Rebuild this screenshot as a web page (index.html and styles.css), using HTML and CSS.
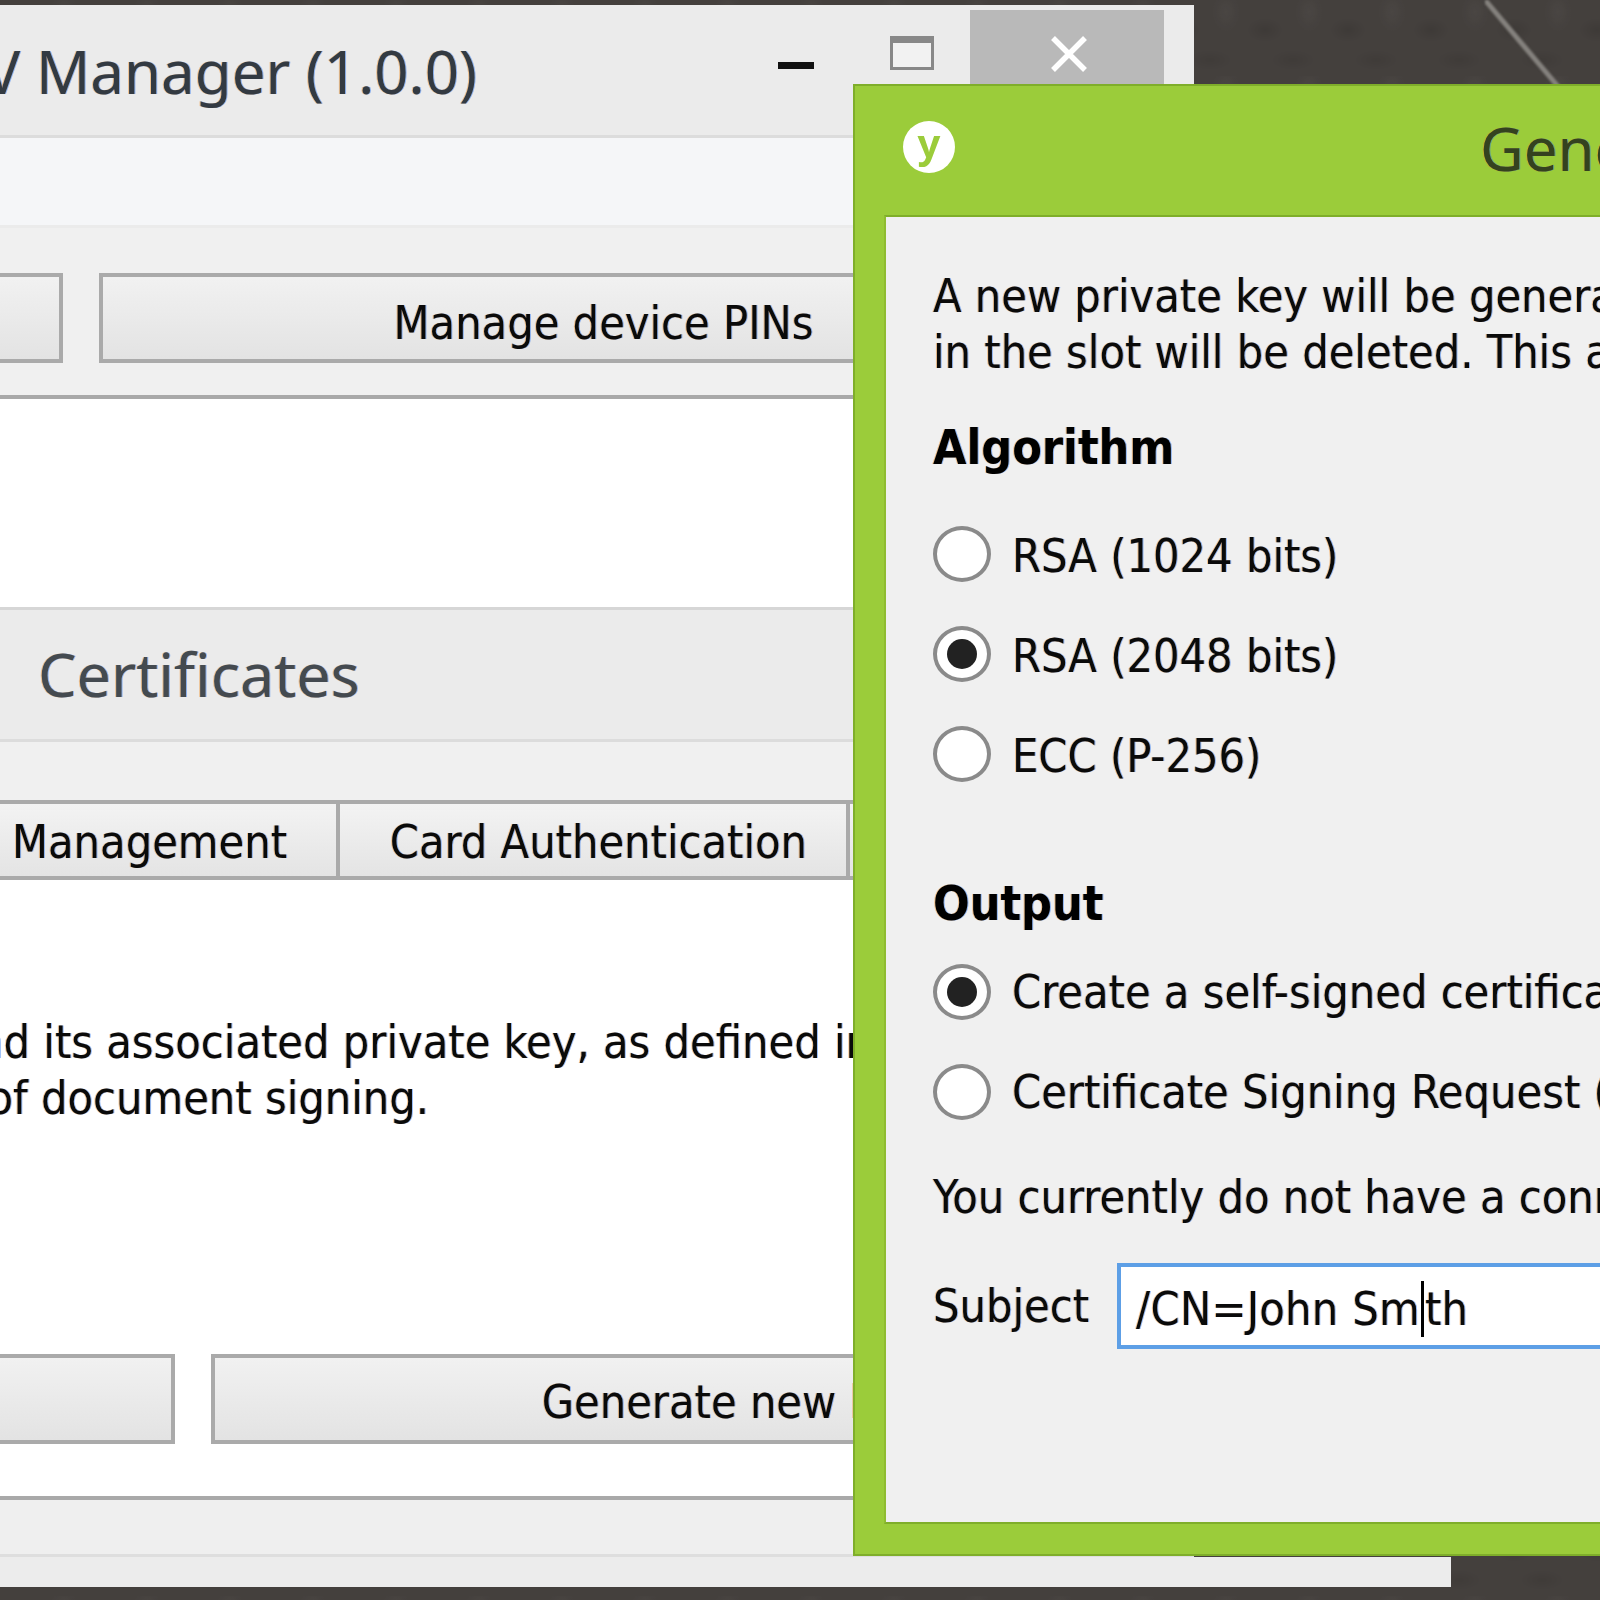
FILE: index.html
```html
<!DOCTYPE html>
<html lang="en">
<head>
<meta charset="utf-8">
<title>YubiKey PIV Manager</title>
<link rel="stylesheet" href="styles.css">
</head>
<body>
<div class="desktop">
  <svg class="streak" width="100" height="100" viewBox="0 0 100 100"><path d="M0 0 L76 90" stroke="#85827e" stroke-width="5" fill="none"/></svg>

  <section class="window main">
    <header class="titlebar">
      <span class="win-title">YubiKey PIV Manager (1.0.0)</span>
      <div class="controls">
        <span class="ctl ctl-min"><i></i></span>
        <span class="ctl ctl-max"><i></i></span>
        <span class="ctl ctl-close">
          <svg width="36" height="36" viewBox="0 0 36 36"><path d="M2 2 L34 34 M34 2 L2 34" stroke="#fff" stroke-width="5.5" fill="none"/></svg>
        </span>
      </div>
    </header>
    <div class="menubar"></div>
    <div class="toolbar">
      <button class="btn btn-a">Change</button>
      <button class="btn btn-b">Manage device PINs</button>
    </div>
    <div class="white-a"></div>
    <h2 class="section-head">Certificates</h2>
    <div class="tabs">
      <span class="tab tab-key">Key Management</span>
      <span class="tab tab-card">Card Authentication</span>
      <span class="tab tab-last"></span>
    </div>
    <div class="panel">
      <p class="panel-line line-one">This slot is for the X.509 certificate and its associated private key, as defined in</p>
      <p class="panel-line line-two">FIPS 201, used for the purposes of document signing.</p>
      <div class="panel-btns">
        <button class="btn btn-c">Import</button>
        <button class="btn btn-d">Generate new key</button>
      </div>
    </div>
    <div class="foot-a"></div>
    <div class="foot-b"></div>
  </section>

  <section class="window dialog">
    <header class="dlg-title">
      <svg class="logo" width="54" height="54" viewBox="0 0 54 54"><circle cx="27" cy="27" r="26" fill="#fff"/><text x="27" y="38" class="logo-y">y</text></svg>
      <span class="dlg-name">Generate new key</span>
    </header>
    <div class="dlg-body">
      <p class="intro">A new private key will be generated and stored in the selected slot. Any existing key<br>in the slot will be deleted. This action cannot be undone.</p>
      <h3 class="group group-alg">Algorithm</h3>
      <div class="radios">
        <label class="radio"><span class="dot"></span>RSA (1024 bits)</label>
        <label class="radio"><span class="dot on"></span>RSA (2048 bits)</label>
        <label class="radio"><span class="dot"></span>ECC (P-256)</label>
      </div>
      <h3 class="group group-out">Output</h3>
      <div class="radios">
        <label class="radio"><span class="dot on"></span>Create a self-signed certificate for the key</label>
        <label class="radio"><span class="dot"></span>Certificate Signing Request (CSR)</label>
      </div>
      <p class="note">You currently do not have a connection to the server</p>
      <div class="subject">
        <span class="subject-label">Subject</span>
        <div class="field"><span>/CN=John Sm</span><i class="caret"></i><span>th</span></div>
      </div>
    </div>
  </section>
</div>
</body>
</html>
```
FILE: styles.css
```css
html, body { margin: 0; padding: 0; }
p, h2, h3 { margin: 0; }
body { width: 1600px; height: 1600px; overflow: hidden; background: #3f3b38; }
.desktop {
  position: relative; width: 1600px; height: 1600px; overflow: hidden;
  background-color: #44403d;
  background-image:
    radial-gradient(ellipse 18px 12px at 20px 30px, rgba(0,0,0,.09), transparent),
    radial-gradient(ellipse 14px 20px at 64px 12px, rgba(255,255,255,.03), transparent),
    radial-gradient(ellipse 22px 10px at 48px 60px, rgba(0,0,0,.07), transparent);
  background-size: 83px 76px;
  font-family: "DejaVu Sans", "Noto Sans", sans-serif;
  font-stretch: condensed;
  font-size: 46.4px;
  color: #0a0a0a;
}
.desktop, .btn, .field { text-shadow: -1px 0 rgba(240,140,30,.45), 1px 0 rgba(30,110,240,.45); }
.streak { position: absolute; left: 1485px; top: 0; filter: blur(.8px); }

.window { position: absolute; box-sizing: border-box; filter: blur(.6px); }
.main {
  left: -400px; top: 5px; width: 1594px; height: 1582px;
  background: #f0f0f0; display: flex; flex-direction: column;
}
.titlebar {
  height: 133px; flex: none; box-sizing: border-box; position: relative;
  background: #ebebeb; border-bottom: 3px solid #dcdcdc;
}
.win-title { position: absolute; left: -100px; top: 26px; width: 977px; text-align: right; font-family: "Noto Sans", sans-serif; font-stretch: normal; font-size: 60px; line-height: 80px; color: #333a42; white-space: nowrap; }
.controls { position: absolute; right: 30px; top: 5px; display: flex; align-items: stretch; height: 78px; }
.ctl { display: flex; align-items: center; justify-content: center; }
.ctl-min { width: 100px; margin-right: 5px; padding-right: 9px; }
.ctl-min i { display: block; width: 36px; height: 7px; background: #111; margin-top: 32px; }
.ctl-max { width: 104px; padding-right: 2px; }
.ctl-max i { display: block; box-sizing: border-box; width: 44px; height: 34px; border: 3px solid #888; border-top-width: 7px; background: #f2f2f2; margin-top: 8px; }
.ctl-close { width: 194px; background: #b9b9b9; margin-left: 4px; }
.ctl-close svg { margin: 10px 0 0 4px; }

.menubar { height: 90px; flex: none; background: #f5f6f8; border-bottom: 3px solid #ebebeb; box-sizing: border-box; }
.toolbar { height: 171px; flex: none; box-sizing: border-box; padding: 45px 0 0 0; display: flex; gap: 36px; border-bottom: 4px solid #a9a9a9; }
.btn {
  box-sizing: border-box; height: 90px; font: inherit; color: #0a0a0a; padding: 9px 0 0;
  background: linear-gradient(#f1f1f1, #e3e3e3);
  border: 4px solid #aaa;
}
.btn-a { width: 425px; margin-left: 38px; }
.btn-b { width: 1009px; flex: none; }
.white-a { height: 211px; flex: none; background: #fff; border-bottom: 3px solid #d6d6d6; box-sizing: border-box; }
.section-head { height: 132px; flex: none; box-sizing: border-box; background: #ebebeb; border-bottom: 3px solid #dcdcdc; font-family: "Noto Sans", sans-serif; font-stretch: normal; font-size: 61px; font-weight: 400; color: #444a50; padding: 24px 0 0 438px; line-height: 80px; }
.tabs { height: 138px; flex: none; box-sizing: border-box; padding-top: 58px; display: flex; }
.tab { box-sizing: border-box; height: 80px; padding-top: 4px; background: linear-gradient(#f3f3f3, #e4e4e4); border: 4px solid #aaa; border-left: 0; display: flex; align-items: center; justify-content: flex-end; white-space: nowrap; }
.tab-key { width: 740px; padding-right: 49px; }
.tab-card { width: 510px; padding-right: 39px; }
.tab-last { width: 300px; }
.panel { height: 620px; flex: none; box-sizing: border-box; background: #fff; border-bottom: 4px solid #a9a9a9; padding-top: 134px; display: flex; flex-direction: column; }
.panel-line { line-height: 56px; white-space: nowrap; display: flex; justify-content: flex-end; }
.line-one { width: 1272px; }
.line-two { width: 829px; }
.panel-btns { display: flex; gap: 36px; margin-top: 228px; }
.btn-c { width: 575px; flex: none; }
.btn-d { width: 1042px; flex: none; padding-top: 5px; }
.foot-a { height: 54px; flex: none; background: #efefef; border-bottom: 3px solid #dedede; box-sizing: content-box; }
.foot-b { flex: 1; background: #ececec; align-self: flex-start; width: 1851px; }

.dialog {
  left: 853px; top: 84px; width: 1000px; height: 1472px;
  background: #9bcc3a; border: 2px solid #7fae2a; border-right: 0;
}
.dlg-title { height: 129px; display: flex; align-items: center; position: relative; }
.logo { margin-left: 47px; margin-top: -8px; }
.logo-y { font-family: "Noto Sans", sans-serif; font-weight: 700; font-size: 40px; fill: #9bcc3a; text-anchor: middle; text-shadow: none; }
.dlg-name { position: absolute; left: 625px; top: 22px; font-family: "Noto Sans", sans-serif; font-stretch: normal; font-size: 60px; line-height: 80px; color: #34421f; white-space: nowrap; }
.dlg-body {
  margin-left: 29px; height: 1309px; box-sizing: border-box; background: #f0f0f0;
  padding: 51px 0 0 47px; border-top: 2px solid #7fae2a; border-left: 2px solid #8fbc30; border-bottom: 2px solid #7fae2a;
  white-space: nowrap;
}
.intro { line-height: 56px; }
.group { font-size: 48px; font-weight: 700; line-height: 56px; color: #000; }
.group-alg { margin-top: 39px; }
.group-out { margin-top: 91px; }
.radios { display: flex; flex-direction: column; gap: 44px; margin-top: 53px; }
.radio { display: flex; align-items: center; height: 56px; gap: 21px; }
.group-out + .radios { margin-top: 33px; }
.group-alg + .radios .dot { margin-top: -5px; }
.dot { box-sizing: border-box; flex: none; width: 58px; height: 56px; border-radius: 50%; background: #fff; border: 4px solid #8a8a8a; position: relative; }
.dot.on::after { content: ""; position: absolute; left: 10px; top: 9px; width: 30px; height: 30px; border-radius: 50%; background: #222; }
.note { margin-top: 49px; line-height: 56px; }
.subject { display: flex; align-items: center; margin-top: 38px; gap: 28px; }
.field { box-sizing: border-box; width: 700px; height: 86px; background: #fff; border: 4px solid #5d9fe6; display: flex; align-items: center; padding: 6px 0 0 15px; white-space: pre; letter-spacing: .3px; }
.caret { display: block; width: 3px; height: 56px; background: #000; margin: 0 1px; }
```
